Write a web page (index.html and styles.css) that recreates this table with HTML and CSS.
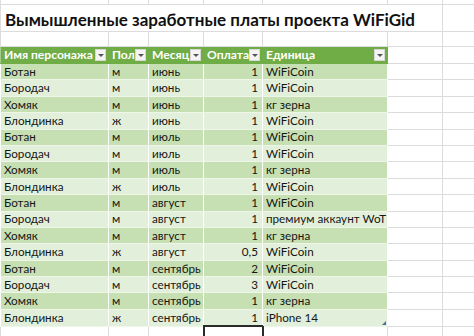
FILE: index.html
```html
<!DOCTYPE html>
<html lang="ru">
<head>
<meta charset="utf-8">
<title>WiFiGid</title>
<link rel="stylesheet" href="styles.css">
</head>
<body>
<table class="sheet">
  <colgroup>
    <col class="c-a"><col class="c-b"><col class="c-c"><col class="c-d"><col class="c-e"><col class="c-f"><col class="c-g">
  </colgroup>
  <tr class="r-top"><td></td><td></td><td></td><td></td><td></td><td></td><td></td></tr>
  <tr class="r-title"><td colspan="6" class="title">Вымышленные заработные платы проекта WiFiGid</td><td></td></tr>
  <tr class="r-blank"><td></td><td></td><td></td><td></td><td></td><td></td><td></td></tr>
  <tr class="r-head">
    <td class="h"><div class="hc"><span>Имя персонажа</span><i class="flt"></i></div></td>
    <td class="h"><div class="hc"><span>Пол</span><i class="flt"></i></div></td>
    <td class="h"><div class="hc"><span>Месяц</span><i class="flt"></i></div></td>
    <td class="h"><div class="hc"><span>Оплата</span><i class="flt"></i></div></td>
    <td class="h"><div class="hc"><span>Единица</span><i class="flt"></i></div></td>
    <td></td><td></td>
  </tr>
  <tr class="d odd"><td>Ботан</td><td>м</td><td>июнь</td><td class="n">1</td><td>WiFiCoin</td><td class="g"></td><td class="g"></td></tr>
  <tr class="d even"><td>Бородач</td><td>м</td><td>июнь</td><td class="n">1</td><td>WiFiCoin</td><td class="g"></td><td class="g"></td></tr>
  <tr class="d odd"><td>Хомяк</td><td>м</td><td>июнь</td><td class="n">1</td><td>кг зерна</td><td class="g"></td><td class="g"></td></tr>
  <tr class="d even"><td>Блондинка</td><td>ж</td><td>июнь</td><td class="n">1</td><td>WiFiCoin</td><td class="g"></td><td class="g"></td></tr>
  <tr class="d odd"><td>Ботан</td><td>м</td><td>июль</td><td class="n">1</td><td>WiFiCoin</td><td class="g"></td><td class="g"></td></tr>
  <tr class="d even"><td>Бородач</td><td>м</td><td>июль</td><td class="n">1</td><td>WiFiCoin</td><td class="g"></td><td class="g"></td></tr>
  <tr class="d odd"><td>Хомяк</td><td>м</td><td>июль</td><td class="n">1</td><td>кг зерна</td><td class="g"></td><td class="g"></td></tr>
  <tr class="d even"><td>Блондинка</td><td>ж</td><td>июль</td><td class="n">1</td><td>WiFiCoin</td><td class="g"></td><td class="g"></td></tr>
  <tr class="d odd"><td>Ботан</td><td>м</td><td>август</td><td class="n">1</td><td>WiFiCoin</td><td class="g"></td><td class="g"></td></tr>
  <tr class="d even"><td>Бородач</td><td>м</td><td>август</td><td class="n">1</td><td>премиум аккаунт WoT</td><td class="g"></td><td class="g"></td></tr>
  <tr class="d odd"><td>Хомяк</td><td>м</td><td>август</td><td class="n">1</td><td>кг зерна</td><td class="g"></td><td class="g"></td></tr>
  <tr class="d even"><td>Блондинка</td><td>ж</td><td>август</td><td class="n">0,5</td><td>WiFiCoin</td><td class="g"></td><td class="g"></td></tr>
  <tr class="d odd"><td>Ботан</td><td>м</td><td>сентябрь</td><td class="n">2</td><td>WiFiCoin</td><td class="g"></td><td class="g"></td></tr>
  <tr class="d even"><td>Бородач</td><td>м</td><td>сентябрь</td><td class="n">3</td><td>WiFiCoin</td><td class="g"></td><td class="g"></td></tr>
  <tr class="d odd"><td>Хомяк</td><td>м</td><td>сентябрь</td><td class="n">1</td><td>кг зерна</td><td class="g"></td><td class="g"></td></tr>
  <tr class="d even last"><td>Блондинка</td><td>ж</td><td>сентябрь</td><td class="n">1</td><td class="corner">iPhone 14</td><td class="g"></td><td class="g"></td></tr>
  <tr class="r-bottom"><td></td><td></td><td></td><td class="sel"></td><td></td><td></td><td></td></tr>
</table>
</body>
</html>
```

FILE: styles.css
```css
html, body {
  margin: 0;
  padding: 0;
  background: #ffffff;
  overflow: hidden;
}
body {
  font-family: Lato, "Open Sans", "Liberation Sans", sans-serif;
  color: #161616;
}
.sheet {
  border-collapse: collapse;
  table-layout: fixed;
  width: 540px;
}
.c-a { width: 108px; }
.c-b { width: 40px; }
.c-c { width: 55px; }
.c-d { width: 59px; }
.c-e { width: 125px; }
.c-f { width: 55px; }
.c-g { width: 98px; }
.sheet td {
  border: 1px solid #dcdcdc;
  padding: 0 3px;
  white-space: nowrap;
  overflow: hidden;
  font-size: 11.7px;
  line-height: 1;
}
.r-top td { height: 4px; border-top: none; }
.r-title td { height: 24px; }
.r-blank td { height: 14px; }
.sheet td.title {
  font-weight: 700;
  font-size: 17px;
  color: #111;
  padding-left: 4px;
  padding-top: 2px;
  overflow: visible;
  vertical-align: middle;
}
.r-head td { height: 16px; }
.r-head td.h {
  background: #70ad47;
  color: #ffffff;
  font-weight: 700;
  font-size: 12.1px;
  border: 1px solid #70ad47;
  border-left: 1px solid #a7cd8e;
  padding: 0 2px 0 3px;
}
.hc {
  display: flex;
  align-items: center;
  justify-content: space-between;
}
.flt {
  display: block;
  width: 11px;
  height: 12px;
  box-sizing: border-box;
  background: #f4f4f4;
  border: 1px solid #d8d8d8;
  position: relative;
}
.flt::after {
  content: "";
  position: absolute;
  left: 2px;
  top: 4px;
  border-left: 3px solid transparent;
  border-right: 3px solid transparent;
  border-top: 3px solid #555;
}
.d td { height: 15.4px; }
.d.odd td { background: #c6e0b4; }
.d.even td { background: #e2efda; }
.d td {
  border-left-color: transparent;
  border-right-color: transparent;
  border-top: 1px solid #eef6e8;
  border-bottom: 1px solid #eef6e8;
}
.d td.g {
  background: #ffffff;
  border: 1px solid #dcdcdc;
}
.d td.n { text-align: right; padding-right: 4px; }
.corner { position: relative; }
.corner::after {
  content: "";
  position: absolute;
  right: 1px;
  bottom: 1px;
  border-left: 4px solid transparent;
  border-bottom: 4px solid #4a6fa5;
}
.r-bottom td { height: 14px; }
.r-bottom td.sel {
  border: 2px solid #2a2a2a;
}
```
